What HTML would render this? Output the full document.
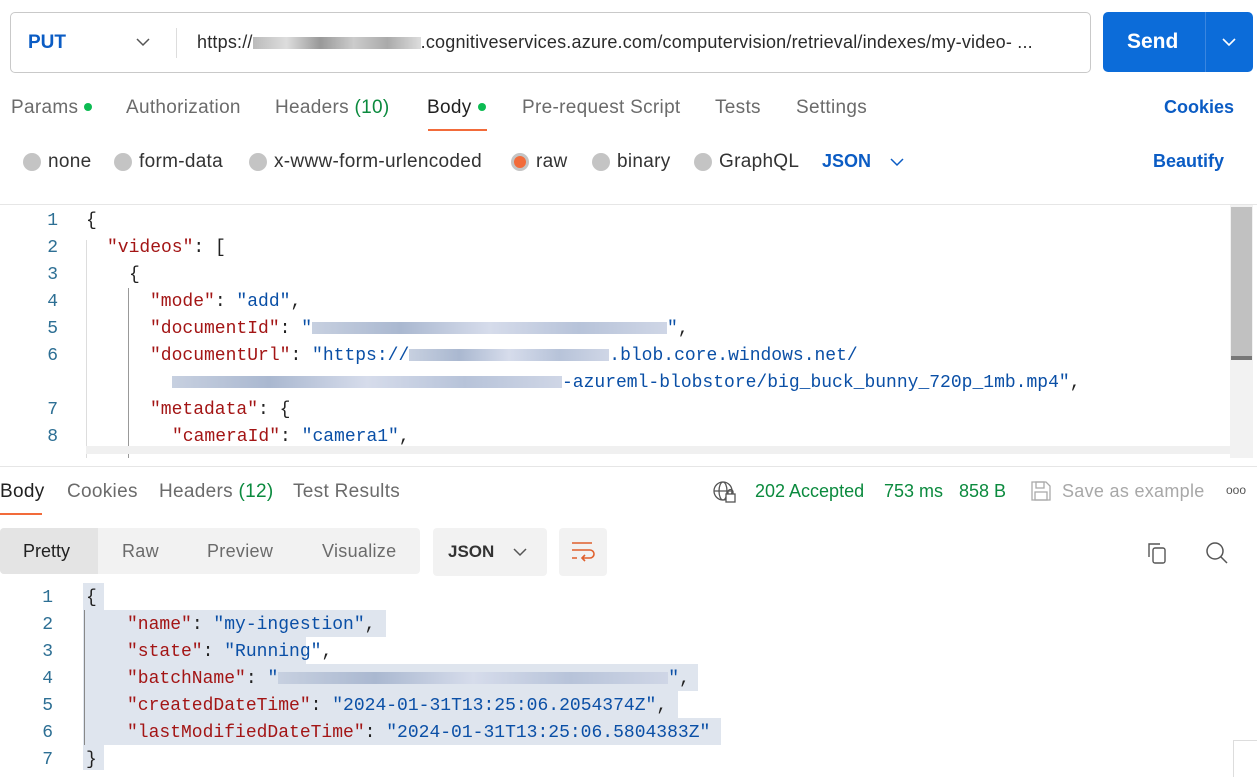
<!DOCTYPE html>
<html><head><meta charset="utf-8"><style>
*{margin:0;padding:0;box-sizing:border-box}
body{width:1257px;height:777px;overflow:hidden;background:#fff;font-family:"Liberation Sans",sans-serif;position:relative;color:#212121}
.a{position:absolute;white-space:nowrap}
.t{font-size:19px;letter-spacing:0.3px;color:#6b6b6b}
.g{color:#0b8a3e}
.dot{display:inline-block;width:8px;height:8px;border-radius:50%;background:#0cbb52;margin-left:6px;vertical-align:2px}
.r{position:absolute;width:18px;height:18px;border-radius:50%;background:#c4c4c4}
.code{font-family:"Liberation Mono",monospace;font-size:18px;color:#212121}
.ln{position:absolute;width:58px;text-align:right;font-family:"Liberation Mono",monospace;font-size:18px;color:#2d6f94}
.k{color:#a31515}.s{color:#0a4fa6}
.blur{display:inline-block;height:12px;background:linear-gradient(90deg,#c7d0e0,#aab8d0,#d6dceb,#b7c3d9,#cfd6e6);vertical-align:middle}
.sel{position:absolute;background:#dfe5ee}
</style></head><body>
<div class="a" style="left:10px;top:12px;width:1081px;height:61px;border:1px solid #c9c9c9;border-radius:5px"></div>
<div class="a" style="left:28px;top:32px;font-size:19px;font-weight:bold;color:#0b5cc4">PUT</div>
<svg class="a" style="left:136px;top:37px" width="14" height="10"><path d="M1 2l6 6 6-6" stroke="#555" stroke-width="1.5" fill="none"/></svg>
<div class="a" style="left:176px;top:28px;width:1px;height:30px;background:#ddd"></div>
<div class="a" style="left:197px;top:32px;font-size:18px;letter-spacing:0.2px;color:#2b2b2b">https://<span style="display:inline-block;width:168px;height:12px;background:linear-gradient(90deg,#bbb,#ddd,#999,#ccc,#aaa,#ddd);vertical-align:middle"></span>.cognitiveservices.azure.com/computervision/retrieval/indexes/my-video- ...</div>
<div class="a" style="left:1103px;top:12px;width:150px;height:60px;background:#0c6cd9;border-radius:5px"></div>
<div class="a" style="left:1127px;top:30px;font-size:21px;font-weight:bold;color:#fff">Send</div>
<div class="a" style="left:1205px;top:12px;width:1px;height:60px;background:#3a86e0"></div>
<svg class="a" style="left:1222px;top:37px" width="14" height="10"><path d="M1 2l6 6 6-6" stroke="#fff" stroke-width="1.6" fill="none"/></svg>
<div class="a t" style="left:11px;top:97px">Params<span class="dot"></span></div>
<div class="a t" style="left:126px;top:97px">Authorization</div>
<div class="a t" style="left:275px;top:97px">Headers <span class="g">(10)</span></div>
<div class="a t" style="left:427px;top:97px;color:#212121">Body<span class="dot"></span></div>
<div class="a" style="left:428px;top:129px;width:59px;height:2px;background:#f26b3a"></div>
<div class="a t" style="left:522px;top:97px">Pre-request Script</div>
<div class="a t" style="left:715px;top:97px">Tests</div>
<div class="a t" style="left:796px;top:97px">Settings</div>
<div class="a" style="left:1164px;top:97px;font-size:18px;font-weight:bold;color:#0b5cc4">Cookies</div>
<div class="r" style="left:23px;top:153px"></div><div class="a t" style="left:48px;top:151px;color:#333">none</div>
<div class="r" style="left:114px;top:153px"></div><div class="a t" style="left:139px;top:151px;color:#333">form-data</div>
<div class="r" style="left:249px;top:153px"></div><div class="a t" style="left:274px;top:151px;color:#333">x-www-form-urlencoded</div>
<div class="r" style="left:511px;top:153px;background:#f26b3a;border:3px solid #c4c4c4"></div><div class="a t" style="left:536px;top:151px;color:#333">raw</div>
<div class="r" style="left:592px;top:153px"></div><div class="a t" style="left:617px;top:151px;color:#333">binary</div>
<div class="r" style="left:694px;top:153px"></div><div class="a t" style="left:719px;top:151px;color:#333">GraphQL</div>
<div class="a" style="left:822px;top:151px;font-size:18px;font-weight:bold;color:#0b5cc4">JSON</div>
<svg class="a" style="left:890px;top:157px" width="14" height="10"><path d="M1 2l6 6 6-6" stroke="#0b5cc4" stroke-width="1.5" fill="none"/></svg>
<div class="a" style="left:1153px;top:151px;font-size:18px;font-weight:bold;color:#0b5cc4">Beautify</div>
<div class="a" style="left:0;top:204px;width:1257px;height:1px;background:#e6e6e6"></div>
<div class="a" style="left:1230px;top:205px;width:23px;height:255px;background:#f2f2f2"></div>
<div class="a" style="left:1231px;top:207px;width:21px;height:152px;background:#c1c1c1"></div>
<div class="a" style="left:1231px;top:356px;width:21px;height:4px;background:#777"></div>
<div class="a" style="left:86px;top:240px;width:1px;height:220px;background:#ddd"></div>
<div class="a" style="left:128px;top:288px;width:1px;height:172px;background:#999"></div>
<div class="a" style="left:86px;top:446px;width:1144px;height:8px;background:#f0f0f0"></div>
<div class="ln" style="left:0;top:211px">1</div>
<div class="ln" style="left:0;top:238px">2</div>
<div class="ln" style="left:0;top:265px">3</div>
<div class="ln" style="left:0;top:292px">4</div>
<div class="ln" style="left:0;top:319px">5</div>
<div class="ln" style="left:0;top:346px">6</div>
<div class="ln" style="left:0;top:400px">7</div>
<div class="ln" style="left:0;top:427px">8</div>
<div class="a code" style="left:86px;top:211px">{</div>
<div class="a code" style="left:107px;top:238px"><span class="k">"videos"</span>: [</div>
<div class="a code" style="left:129px;top:265px">{</div>
<div class="a code" style="left:150px;top:292px"><span class="k">"mode"</span>: <span class="s">"add"</span>,</div>
<div class="a code" style="left:150px;top:319px"><span class="k">"documentId"</span>: <span class="s">"<span class="blur" style="width:355px"></span>"</span>,</div>
<div class="a code" style="left:150px;top:346px"><span class="k">"documentUrl"</span>: <span class="s">"https://<span class="blur" style="width:200px"></span>.blob.core.windows.net/</span></div>
<div class="a code" style="left:172px;top:373px"><span class="s"><span class="blur" style="width:390px"></span>-azureml-blobstore/big_buck_bunny_720p_1mb.mp4"</span>,</div>
<div class="a code" style="left:150px;top:400px"><span class="k">"metadata"</span>: {</div>
<div class="a code" style="left:172px;top:427px"><span class="k">"cameraId"</span>: <span class="s">"camera1"</span>,</div>
<div class="a" style="left:0;top:458px;width:1257px;height:8px;background:#fff"></div>
<div class="a" style="left:0;top:466px;width:1257px;height:1px;background:#e6e6e6"></div>
<div class="a t" style="left:0;top:481px;color:#212121">Body</div>
<div class="a" style="left:0;top:513px;width:42px;height:2px;background:#f26b3a"></div>
<div class="a t" style="left:67px;top:481px">Cookies</div>
<div class="a t" style="left:159px;top:481px">Headers <span class="g">(12)</span></div>
<div class="a t" style="left:293px;top:481px">Test Results</div>
<svg class="a" style="left:712px;top:480px" width="26" height="24" fill="none" stroke="#555" stroke-width="1.3"><circle cx="11" cy="11" r="9"/><ellipse cx="11" cy="11" rx="4" ry="9"/><path d="M2 11h18"/><rect x="14" y="14" width="9" height="8" fill="#fff"/><path d="M16 14v-2a2.5 2.5 0 015 0v2"/></svg>
<div class="a" style="left:755px;top:481px;font-size:18px;color:#0b8a3e">202 Accepted</div>
<div class="a" style="left:884px;top:481px;font-size:18px;color:#0b8a3e">753 ms</div>
<div class="a" style="left:959px;top:481px;font-size:18px;color:#0b8a3e">858 B</div>
<svg class="a" style="left:1030px;top:480px" width="22" height="22" fill="none" stroke="#aaa" stroke-width="1.3"><path d="M2 2h14l4 4v14H2z"/><rect x="6" y="2" width="8" height="6"/><rect x="5" y="12" width="12" height="8"/></svg>
<div class="a" style="left:1062px;top:481px;font-size:18px;letter-spacing:0.3px;color:#a8a8a8">Save as example</div>
<div class="a" style="left:1226px;top:483px;font-size:12px;color:#555;letter-spacing:0px">ooo</div>
<div class="a" style="left:0;top:528px;width:420px;height:46px;background:#f2f2f2;border-radius:4px"></div>
<div class="a" style="left:0;top:528px;width:98px;height:46px;background:#e4e4e4;border-radius:4px 0 0 4px"></div>
<div class="a" style="left:23px;top:541px;font-size:18px;color:#212121">Pretty</div>
<div class="a t" style="left:122px;top:541px;font-size:18px">Raw</div>
<div class="a t" style="left:207px;top:541px;font-size:18px">Preview</div>
<div class="a t" style="left:322px;top:541px;font-size:18px">Visualize</div>
<div class="a" style="left:433px;top:528px;width:114px;height:48px;background:#f2f2f2;border-radius:4px"></div>
<div class="a" style="left:448px;top:542px;font-size:17px;font-weight:bold;color:#333">JSON</div>
<svg class="a" style="left:513px;top:547px" width="14" height="10"><path d="M1 2l6 6 6-6" stroke="#555" stroke-width="1.5" fill="none"/></svg>
<div class="a" style="left:559px;top:528px;width:48px;height:48px;background:#f2f2f2;border-radius:4px"></div>
<svg class="a" style="left:570px;top:540px" width="26" height="24" fill="none" stroke="#e0602d" stroke-width="1.6"><path d="M2 3h20M2 10h18a4 4 0 010 8h-7M15 15l-3 3 3 3M2 18h5"/></svg>
<svg class="a" style="left:1145px;top:541px" width="24" height="24" fill="none" stroke="#555" stroke-width="1.4"><path d="M4 16V3h11"/><rect x="8" y="7" width="12" height="15" rx="2"/></svg>
<svg class="a" style="left:1204px;top:540px" width="26" height="26" fill="none" stroke="#555" stroke-width="1.5"><circle cx="11" cy="11" r="8"/><path d="M17 17l6 6"/></svg>
<div class="a" style="left:1233px;top:740px;width:24px;height:37px;border-left:1px solid #ddd;border-top:1px solid #ddd"></div>
<div class="sel" style="left:83px;top:583px;width:21px;height:27px"></div>
<div class="sel" style="left:83px;top:610px;width:303px;height:27px"></div>
<div class="sel" style="left:83px;top:637px;width:223px;height:27px"></div>
<div class="sel" style="left:83px;top:664px;width:615px;height:27px"></div>
<div class="sel" style="left:83px;top:691px;width:595px;height:27px"></div>
<div class="sel" style="left:83px;top:718px;width:638px;height:27px"></div>
<div class="sel" style="left:83px;top:745px;width:21px;height:25px"></div>
<div class="a" style="left:84px;top:610px;width:1px;height:135px;background:#888"></div>
<div class="ln" style="left:-5px;top:588px">1</div>
<div class="ln" style="left:-5px;top:615px">2</div>
<div class="ln" style="left:-5px;top:642px">3</div>
<div class="ln" style="left:-5px;top:669px">4</div>
<div class="ln" style="left:-5px;top:696px">5</div>
<div class="ln" style="left:-5px;top:723px">6</div>
<div class="ln" style="left:-5px;top:750px">7</div>
<div class="a code" style="left:86px;top:588px">{</div>
<div class="a code" style="left:127px;top:615px"><span class="k">"name"</span>: <span class="s">"my-ingestion"</span>,</div>
<div class="a code" style="left:127px;top:642px"><span class="k">"state"</span>: <span class="s">"Running"</span>,</div>
<div class="a code" style="left:127px;top:669px"><span class="k">"batchName"</span>: <span class="s">"<span class="blur" style="width:390px"></span>"</span>,</div>
<div class="a code" style="left:127px;top:696px"><span class="k">"createdDateTime"</span>: <span class="s">"2024-01-31T13:25:06.2054374Z"</span>,</div>
<div class="a code" style="left:127px;top:723px"><span class="k">"lastModifiedDateTime"</span>: <span class="s">"2024-01-31T13:25:06.5804383Z"</span></div>
<div class="a code" style="left:86px;top:750px">}</div>
</body></html>
